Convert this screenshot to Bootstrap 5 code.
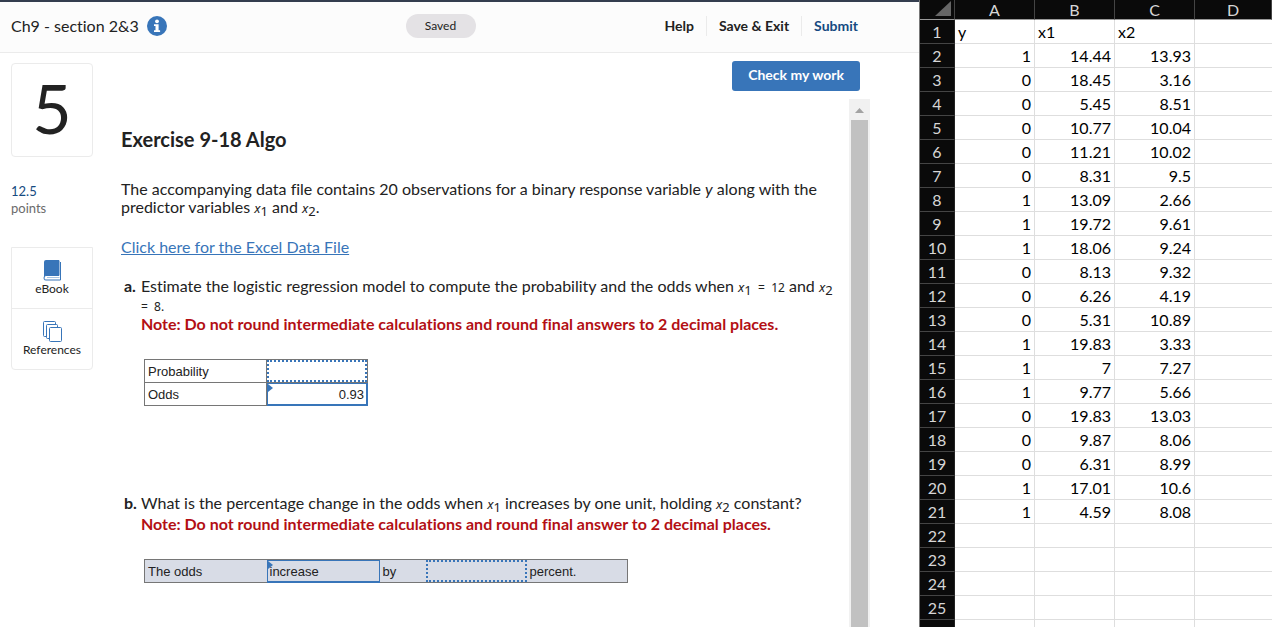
<!DOCTYPE html>
<html lang="en">
<head>
<meta charset="utf-8">
<meta name="viewport" content="width=device-width, initial-scale=1">
<title>Ch9 - section 2&amp;3</title>
<link href="https://cdn.jsdelivr.net/npm/bootstrap@5.3.0/dist/css/bootstrap.min.css" rel="stylesheet">
<style>
  :root { --accent: #3875b9; --ink: #222; --rule: #ebebeb; }
  body { font-family: Lato, sans-serif; font-size: 16px; line-height: 18px; font-variant-ligatures: none; color: var(--ink); background: #fff; }
  .quiz { min-width: 0; border-right: 1px solid #777; }
  .topbar { height: 53px; border-top: 2px solid #343d4e; border-bottom: 1px solid var(--rule); background: #fcfcfc; padding: 0 49px 3px 11px; }
  .side { flex: 1 1 0; }
  .saved { background: #e4e2e5; font-size: 12px; line-height: 24px; width: 70px; }
  .topnav a { font-size: 14px; font-weight: 700; line-height: 20px; color: var(--ink); padding: 0 12px; text-decoration: none; }
  .topnav a + a { border-left: 1px solid var(--rule); }
  .topnav a:last-child { color: #154a81; }
  .rail { width: 93px; padding: 10px 0 0 11px; }
  .number { height: 94px; border: 1px solid var(--rule); border-radius: 4px; font-size: 68px; line-height: 88px; }
  .points { margin-top: 26px; font-size: 13px; line-height: 17px; color: #6b6b6b; }
  .points strong { font-weight: 400; color: #154a81; }
  .tools { margin-top: 30px; border: 1px solid var(--rule); border-radius: 0 0 4px 4px; }
  .tools a { height: 60px; font-size: 12px; line-height: 16px; color: var(--ink); text-decoration: none; padding-top: 12px; }
  .tools a + a { height: 61px; border-top: 1px solid var(--rule); }
  .work { min-width: 0; margin-left: 28px; padding-right: 49px; }
  .check { background: var(--accent); border: 0; border-radius: 3px; font-size: 14px; font-weight: 700; line-height: 20px; padding: 4px 16px 6px; margin: 8px 10px 8px 0; height: 30px; color: #fff; }
  .check:hover { background: #2d639f; color: #fff; }
  .question { min-width: 0; padding-top: 28px; white-space: nowrap; }
  h1 { font-size: 20px; line-height: 24px; font-weight: 700; margin: 0 0 29px; }
  .question p { margin-bottom: 21px; }
  .question a { color: var(--accent); }
  .part { padding-left: 3px; }
  .part > b { flex: none; width: 17px; }
  .part + .answers { margin-bottom: 88px; }
  .var, .num { font-family: "Noto Sans", sans-serif; font-size: 12px; line-height: 16px; }
  .var i { font-size: 13px; }
  .var sub { font-size: 13px; bottom: -3px; }
  .note { display: block; margin-top: 2px; font-weight: 700; color: #b30f14; }
  .answers { font: 13px/16px "Liberation Sans", sans-serif; margin: 26px 0 0 23px; border-collapse: collapse; table-layout: fixed; }
  .answers th, .answers td { border: 1px solid #767676; font-weight: 400; padding: 2px 3px 0; height: 23px; }
  .answers .field { padding: 0; position: relative; }
  .answers input { display: block; width: 100%; height: 22px; border: 1px solid var(--accent); border-radius: 0; background: transparent; padding: 1px 2px 0; color: var(--ink); outline: 0; }
  .answers .blank { border: 2px dotted var(--accent); padding: 0 2px; }
  .answers .flag { outline: 1px solid var(--accent); outline-offset: -1px; }
  .flag::before { content: ""; position: absolute; left: 1px; top: 1px; border: solid transparent; border-width: 4px 0 4px 5px; border-left-color: var(--accent); }
  .w-label { width: 122px; } .w-blank { width: 101px; } .w-pick { width: 113px; } .w-by { width: 46px; }
  .sentence { background: #d8dce6; }
  .sentence th, .sentence td { border-left: 0; border-right: 0; }
  .sentence th { border-left: 1px solid #767676; }
  .sentence td:last-child { border-right: 1px solid #767676; }
  .scroller { width: 21px; background: #f1f1f1; }
  .scroller .thumb { width: 17px; background: #c1c1c1; }
  .sheet { width: 352px; background: #fff; }
  .sheet table { width: 100%; border-collapse: separate; border-spacing: 0; table-layout: fixed; color: #000; line-height: 20px; white-space: nowrap; }
  .sheet th { background: #0a0a0a; color: #d6d6d6; font-weight: 400; text-align: center; padding: 0; border-right: 1px solid #444; border-bottom: 1px solid #444; }
  .sheet thead th { height: 20px; line-height: 19px; border-bottom-color: #999; }
  .sheet tbody th { border-right-color: #222; padding: 2px 0 1px; }
  .sheet td { height: 24px; text-align: right; padding: 2px 3px 1px; border-right: 1px solid #dedede; border-bottom: 1px solid #dedede; }
  .sheet td:last-child { border-right: 0; }
  .sheet .heads td { text-align: left; }
  .sheet svg { display: block; margin: 0 3px 3px auto; }
  .w-rows { width: 35px; } .w-col { width: 80px; }
</style>
</head>
<body>
<div class="d-flex vh-100 overflow-hidden">
  <main class="quiz d-flex flex-column flex-grow-1">
    <header class="topbar d-flex align-items-center flex-shrink-0">
      <div class="side d-flex align-items-center gap-2">
        <span>Ch9 - section 2&amp;3</span>
        <svg width="20" height="20" viewBox="0 0 20 20" role="img" aria-label="Information"><circle cx="10" cy="10" r="10" fill="#3875b9"/><circle cx="10" cy="5.3" r="1.9" fill="#fff"/><path d="M7 8.200h4.600v6h1.500V16H7v-1.800h1.500V10H7z" fill="#fff"/></svg>
      </div>
      <span class="saved rounded-pill text-center">Saved</span>
      <nav class="topnav side d-flex justify-content-end">
        <a href="#">Help</a><a href="#">Save &amp; Exit</a><a href="#">Submit</a>
      </nav>
    </header>
    <div class="d-flex flex-grow-1 overflow-hidden">
      <aside class="rail flex-shrink-0">
        <div class="number text-center">5</div>
        <div class="points"><strong>12.5</strong><br>points</div>
        <nav class="tools">
          <a href="#" class="d-flex flex-column align-items-center">
            <svg width="19" height="21" viewBox="0 0 19 21" fill="none"><path d="M3 .5h13v15H3q-2 0-2 2.500t2 2h14.500V2" stroke="#3875b9"/><path d="M1 2Q1 0 3 0H16v15.500H3Q1 15.500 1 18z" fill="#3875b9"/><path d="M4 17.500h12.500" stroke="#a9c4e2"/></svg>
            <span>eBook</span></a>
          <a href="#" class="d-flex flex-column align-items-center">
            <svg width="19" height="21" viewBox="0 0 19 21" fill="#fff" stroke="#3875b9"><path d="M4 15.500H1.500q-1 0-1-1v-13q0-1 1-1h10q1 0 1 1V3"/><path d="M6 17.500H4.500q-1 0-1-1v-12q0-1 1-1h9q1 0 1 1V6"/><rect x="6.500" y="6.500" width="12" height="14" rx="1"/></svg>
            <span>References</span></a>
        </nav>
      </aside>
      <section class="work d-flex flex-column flex-grow-1">
        <button type="button" class="check btn align-self-end">Check my work</button>
        <div class="d-flex flex-grow-1">
          <article class="question flex-grow-1">
            <h1>Exercise 9-18 Algo</h1>
            <p>The accompanying data file contains 20 observations for a binary response variable <i>y</i> along with the<br>predictor variables <span class="var"><i>x</i><sub>1</sub></span> and <span class="var"><i>x</i><sub>2</sub></span>.</p>
            <p><a href="#">Click here for the Excel Data File</a></p>
            <div class="part d-flex"><b>a.</b>
              <div>Estimate the logistic regression model to compute the probability and the odds when <span class="var"><i>x</i><sub>1</sub></span><span class="num"> &nbsp;= &nbsp;12</span> and <span class="var"><i>x</i><sub>2</sub></span><br><span class="num">= &nbsp;8.</span>
              <span class="note mt-0">Note: Do not round intermediate calculations and round final answers to 2 decimal places.</span></div>
            </div>
            <table class="answers">
              <colgroup><col class="w-label"><col class="w-blank"></colgroup>
              <tr><th scope="row"><label for="prob">Probability</label></th><td class="field"><input id="prob" class="blank text-end" type="text"></td></tr>
              <tr><th scope="row"><label for="odds">Odds</label></th><td class="field flag"><input id="odds" class="text-end" type="text" value="0.93"></td></tr>
            </table>
            <div class="part d-flex"><b>b.</b>
              <div>What is the percentage change in the odds when <span class="var"><i>x</i><sub>1</sub></span> increases by one unit, holding <span class="var"><i>x</i><sub>2</sub></span> constant?
              <span class="note">Note: Do not round intermediate calculations and round final answer to 2 decimal places.</span></div>
            </div>
            <table class="answers sentence">
              <colgroup><col class="w-label"><col class="w-pick"><col class="w-by"><col class="w-blank"><col class="w-blank"></colgroup>
              <tr><th scope="row"><label for="dir">The odds</label></th><td class="field flag"><input id="dir" type="text" value="increase"></td><td><label for="pct">by</label></td><td class="field"><input id="pct" class="blank" type="text"></td><td>percent.</td></tr>
            </table>
          </article>
          <div class="scroller flex-shrink-0 d-flex flex-column align-items-center" aria-hidden="true">
            <svg width="21" height="21" viewBox="0 0 21 21" class="flex-shrink-0"><path d="M6 14l4.500-5 4.500 5z" fill="#a3a3a3"/></svg>
            <div class="thumb flex-grow-1"></div>
          </div>
        </div>
      </section>
    </div>
  </main>
  <aside class="sheet flex-shrink-0">
    <table>
      <colgroup><col class="w-rows"><col class="w-col"><col class="w-col"><col class="w-col"><col></colgroup>
      <thead><tr><th><svg width="16" height="15" viewBox="0 0 16 15"><path d="M16 0v15H0z" fill="#666"/></svg></th><th scope="col">A</th><th scope="col">B</th><th scope="col">C</th><th scope="col">D</th></tr></thead>
      <tbody>
        <tr class="heads"><th scope="row">1</th><td>y</td><td>x1</td><td>x2</td><td></td></tr>
        <tr><th scope="row">2</th><td>1</td><td>14.44</td><td>13.93</td><td></td></tr>
        <tr><th scope="row">3</th><td>0</td><td>18.45</td><td>3.16</td><td></td></tr>
        <tr><th scope="row">4</th><td>0</td><td>5.45</td><td>8.51</td><td></td></tr>
        <tr><th scope="row">5</th><td>0</td><td>10.77</td><td>10.04</td><td></td></tr>
        <tr><th scope="row">6</th><td>0</td><td>11.21</td><td>10.02</td><td></td></tr>
        <tr><th scope="row">7</th><td>0</td><td>8.31</td><td>9.5</td><td></td></tr>
        <tr><th scope="row">8</th><td>1</td><td>13.09</td><td>2.66</td><td></td></tr>
        <tr><th scope="row">9</th><td>1</td><td>19.72</td><td>9.61</td><td></td></tr>
        <tr><th scope="row">10</th><td>1</td><td>18.06</td><td>9.24</td><td></td></tr>
        <tr><th scope="row">11</th><td>0</td><td>8.13</td><td>9.32</td><td></td></tr>
        <tr><th scope="row">12</th><td>0</td><td>6.26</td><td>4.19</td><td></td></tr>
        <tr><th scope="row">13</th><td>0</td><td>5.31</td><td>10.89</td><td></td></tr>
        <tr><th scope="row">14</th><td>1</td><td>19.83</td><td>3.33</td><td></td></tr>
        <tr><th scope="row">15</th><td>1</td><td>7</td><td>7.27</td><td></td></tr>
        <tr><th scope="row">16</th><td>1</td><td>9.77</td><td>5.66</td><td></td></tr>
        <tr><th scope="row">17</th><td>0</td><td>19.83</td><td>13.03</td><td></td></tr>
        <tr><th scope="row">18</th><td>0</td><td>9.87</td><td>8.06</td><td></td></tr>
        <tr><th scope="row">19</th><td>0</td><td>6.31</td><td>8.99</td><td></td></tr>
        <tr><th scope="row">20</th><td>1</td><td>17.01</td><td>10.6</td><td></td></tr>
        <tr><th scope="row">21</th><td>1</td><td>4.59</td><td>8.08</td><td></td></tr>
        <tr><th scope="row">22</th><td></td><td></td><td></td><td></td></tr>
        <tr><th scope="row">23</th><td></td><td></td><td></td><td></td></tr>
        <tr><th scope="row">24</th><td></td><td></td><td></td><td></td></tr>
        <tr><th scope="row">25</th><td></td><td></td><td></td><td></td></tr>
        <tr><th></th><td></td><td></td><td></td><td></td></tr>
      </tbody>
    </table>
  </aside>
</div>
<script src="https://cdn.jsdelivr.net/npm/bootstrap@5.3.0/dist/js/bootstrap.bundle.min.js"></script>
</body>
</html>
